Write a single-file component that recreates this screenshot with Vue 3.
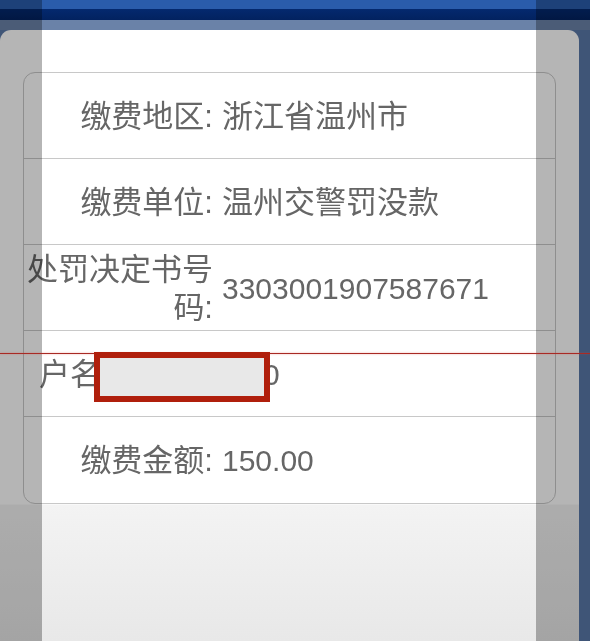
<script setup>
const rows = [
  { label: "缴费地区:", value: "浙江省温州市" },
  { label: "缴费单位:", value: "温州交警罚没款" },
  { label: "处罚决定书号码:", value: "3303001907587671", digits: true },
  { label: "户名", value: "0", masked: true, digits: true },
  { label: "缴费金额:", value: "150.00", digits: true },
];
</script>

<template>
  <div class="page">
    <div class="band-blue"></div>
    <div class="band-navy"></div>
    <div class="band-steel"></div>

    <div class="card">
      <ul class="info-list">
        <li
          v-for="row in rows"
          :key="row.label"
          class="info-row"
          :class="{ masked: row.masked }"
        >
          <span class="info-label">{{ row.label }}</span>
          <span class="info-value" :class="{ digits: row.digits }">{{ row.value }}</span>
        </li>
      </ul>
    </div>

    <!-- 截图上的遮挡和标记 -->
    <div class="stripe stripe-left"></div>
    <div class="stripe stripe-right"></div>
    <div class="red-line"></div>
    <div class="red-box"></div>
  </div>
</template>

<style scoped>
.page {
  position: relative;
  width: 590px;
  height: 641px;
  overflow: hidden;
  background: #5a78a8;
  font-family: "Liberation Sans", "Noto Sans CJK SC", sans-serif;
}

.band-blue {
  height: 9px;
  background: #2a5cab;
}

.band-navy {
  height: 11px;
  background: linear-gradient(#04296f, #02225f);
}

.band-steel {
  height: 10px;
  background: #6a82a8;
}

.card {
  width: 579px;
  height: 611px;
  box-sizing: border-box;
  padding: 42px 23px 0;
  border-radius: 11px 11px 0 0;
  background: linear-gradient(#fff 0, #fff 474px, #f3f3f3 475px, #e8e8e8 100%);
  filter: blur(0.5px);
}

.info-list {
  margin: 0;
  padding: 0;
  list-style: none;
  background: #fff;
  border: 1.5px solid #c8c8c8;
  border-radius: 12px;
}

.info-row {
  display: flex;
  align-items: center;
  height: 86px;
  box-sizing: border-box;
  padding-top: 3px;
  border-bottom: 1.5px solid #c8c8c8;
  color: #666;
  font-size: 31px;
  line-height: 38px;
}

.info-row:last-child {
  height: 86px;
  padding-top: 1px;
  border-bottom: none;
}

.info-label {
  width: 189px;
  flex-shrink: 0;
  text-align: right;
}

.info-value {
  margin-left: 9px;
}

.info-value.digits {
  font-size: 30px;
}

.masked .info-label {
  box-sizing: border-box;
  padding-left: 15px;
  text-align: left;
}

.masked .info-value {
  margin-left: 50px;
}

.stripe {
  position: absolute;
  top: 0;
  bottom: 0;
  background: rgba(0, 0, 0, 0.29);
}

.stripe-left {
  left: 0;
  width: 42px;
}

.stripe-right {
  left: 536px;
  right: 0;
}

.red-line {
  position: absolute;
  top: 353px;
  left: 0;
  right: 0;
  height: 1px;
  background: #a82a24;
  box-shadow: 0 0 2px rgba(225, 70, 60, 0.55);
}

.red-box {
  position: absolute;
  top: 352px;
  left: 94px;
  width: 176px;
  height: 50px;
  box-sizing: border-box;
  border: 6px solid #b01f0c;
  background: #e8e8e8;
}
</style>
